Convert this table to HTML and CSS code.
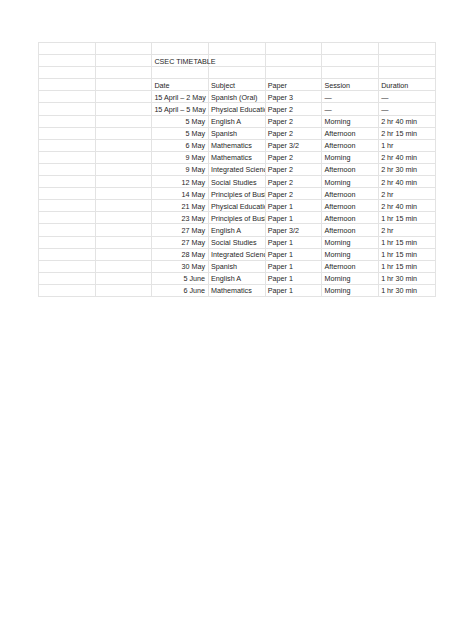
FILE: index.html
```html
<!DOCTYPE html>
<html lang="en">
<head>
<meta charset="utf-8">
<title>CSEC Timetable</title>
<link rel="stylesheet" href="styles.css">
</head>
<body>
<div class="page">
  <div class="sheet">
    <div class="c"></div><div class="c"></div><div class="c"></div><div class="c"></div><div class="c"></div><div class="c"></div><div class="c"></div>
    <div class="c"></div><div class="c"></div><div class="c spill">CSEC TIMETABLE</div><div class="c"></div><div class="c"></div><div class="c"></div><div class="c"></div>
    <div class="c"></div><div class="c"></div><div class="c"></div><div class="c"></div><div class="c"></div><div class="c"></div><div class="c"></div>
    <div class="c"></div><div class="c"></div><div class="c">Date</div><div class="c">Subject</div><div class="c">Paper</div><div class="c">Session</div><div class="c">Duration</div>

    <div class="c"></div><div class="c"></div><div class="c">15 April – 2 May</div><div class="c">Spanish (Oral)</div><div class="c">Paper 3</div><div class="c">—</div><div class="c">—</div>
    <div class="c"></div><div class="c"></div><div class="c">15 April – 5 May</div><div class="c">Physical Education</div><div class="c">Paper 2</div><div class="c">—</div><div class="c">—</div>
    <div class="c"></div><div class="c"></div><div class="c r">5 May</div><div class="c">English A</div><div class="c">Paper 2</div><div class="c">Morning</div><div class="c">2 hr 40 min</div>
    <div class="c"></div><div class="c"></div><div class="c r">5 May</div><div class="c">Spanish</div><div class="c">Paper 2</div><div class="c">Afternoon</div><div class="c">2 hr 15 min</div>
    <div class="c"></div><div class="c"></div><div class="c r">6 May</div><div class="c">Mathematics</div><div class="c">Paper 3/2</div><div class="c">Afternoon</div><div class="c">1 hr</div>
    <div class="c"></div><div class="c"></div><div class="c r">9 May</div><div class="c">Mathematics</div><div class="c">Paper 2</div><div class="c">Morning</div><div class="c">2 hr 40 min</div>
    <div class="c"></div><div class="c"></div><div class="c r">9 May</div><div class="c">Integrated Science</div><div class="c">Paper 2</div><div class="c">Afternoon</div><div class="c">2 hr 30 min</div>
    <div class="c"></div><div class="c"></div><div class="c r">12 May</div><div class="c">Social Studies</div><div class="c">Paper 2</div><div class="c">Morning</div><div class="c">2 hr 40 min</div>
    <div class="c"></div><div class="c"></div><div class="c r">14 May</div><div class="c">Principles of Business</div><div class="c">Paper 2</div><div class="c">Afternoon</div><div class="c">2 hr</div>
    <div class="c"></div><div class="c"></div><div class="c r">21 May</div><div class="c">Physical Education</div><div class="c">Paper 1</div><div class="c">Afternoon</div><div class="c">2 hr 40 min</div>
    <div class="c"></div><div class="c"></div><div class="c r">23 May</div><div class="c">Principles of Business</div><div class="c">Paper 1</div><div class="c">Afternoon</div><div class="c">1 hr 15 min</div>
    <div class="c"></div><div class="c"></div><div class="c r">27 May</div><div class="c">English A</div><div class="c">Paper 3/2</div><div class="c">Afternoon</div><div class="c">2 hr</div>
    <div class="c"></div><div class="c"></div><div class="c r">27 May</div><div class="c">Social Studies</div><div class="c">Paper 1</div><div class="c">Morning</div><div class="c">1 hr 15 min</div>
    <div class="c"></div><div class="c"></div><div class="c r">28 May</div><div class="c">Integrated Science</div><div class="c">Paper 1</div><div class="c">Morning</div><div class="c">1 hr 15 min</div>
    <div class="c"></div><div class="c"></div><div class="c r">30 May</div><div class="c">Spanish</div><div class="c">Paper 1</div><div class="c">Afternoon</div><div class="c">1 hr 15 min</div>
    <div class="c"></div><div class="c"></div><div class="c r">5 June</div><div class="c">English A</div><div class="c">Paper 1</div><div class="c">Morning</div><div class="c">1 hr 30 min</div>
    <div class="c"></div><div class="c"></div><div class="c r">6 June</div><div class="c">Mathematics</div><div class="c">Paper 1</div><div class="c">Morning</div><div class="c">1 hr 30 min</div>
  </div>
</div>
</body>
</html>
```

FILE: styles.css
```css
html, body {
  margin: 0;
  padding: 0;
  background: #ffffff;
}

.page {
  padding: 42px 0 0 38px;
}

.sheet {
  display: grid;
  grid-template-columns: repeat(7, 56.7px);
  grid-auto-rows: 12.1px;
  width: max-content;
  border-top: 1px solid #e3e3e3;
  border-left: 1px solid #e3e3e3;
  font-family: "Liberation Sans", Arial, sans-serif;
  font-size: 7.2px;
  color: #262626;
}

.c {
  box-sizing: border-box;
  border-right: 1px solid #e3e3e3;
  border-bottom: 1px solid #e3e3e3;
  padding: 1.5px 2px 0;
  line-height: 9.6px;
  white-space: nowrap;
  overflow: hidden;
}

.r {
  text-align: right;
  padding-right: 3px;
}

.spill {
  overflow: visible;
}
```
